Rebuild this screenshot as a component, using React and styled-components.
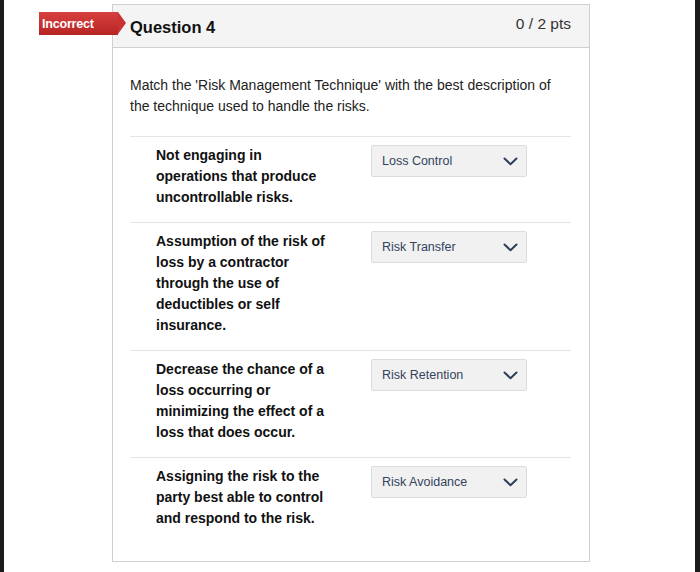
import React from "react";
import styled, { createGlobalStyle } from "styled-components";

const Global = createGlobalStyle`
  html, body { margin: 0; padding: 0; background: #fff; }
  body { font-family: "Liberation Sans", Arial, sans-serif; color: #111; }
`;

const Page = styled.div`
  box-sizing: border-box;
  height: 572px;
  border-left: 4px solid #1b1b1b;
  border-right: 5px solid #1b1b1b;
  padding: 4px 0 0 108px;
  position: relative;
`;

const Card = styled.div`
  position: relative;
  box-sizing: border-box;
  width: 478px;
  height: 558px;
  border: 1px solid #cfcfcf;
  background: #fff;
`;

const Header = styled.div`
  display: flex;
  align-items: center;
  justify-content: space-between;
  height: 42px;
  padding: 0 18px 0 17px;
  background: #f4f4f4;
  border-bottom: 1px solid #cfcfcf;
`;

const Title = styled.div`
  font-size: 16.5px;
  font-weight: 700;
  color: #111;
  margin-top: 3px;
`;

const Points = styled.div`
  font-size: 15.5px;
  color: #333;
  margin-top: -5px;
`;

const Badge = styled.div`
  position: absolute;
  left: -74px;
  top: 7px;
  height: 23px;
  width: 76px;
  padding-left: 3px;
  display: flex;
  align-items: center;
  color: #fff;
  font-size: 12.5px;
  font-weight: 700;
  letter-spacing: -0.2px;
  background: linear-gradient(#d8403f, #b72424);
  &::after {
    content: "";
    position: absolute;
    right: -8px;
    top: 0;
    border-top: 11.5px solid transparent;
    border-bottom: 11.5px solid transparent;
    border-left: 8px solid #c83232;
  }
`;

const Body = styled.div`
  padding: 27px 18px 0 17px;
`;

const Prompt = styled.p`
  margin: 0 0 19px;
  font-size: 14px;
  line-height: 21px;
  color: #222;
`;

const Row = styled.div`
  display: grid;
  grid-template-columns: 180px 156px;
  column-gap: 35px;
  align-items: start;
  padding: 8px 0 14px 26px;
  border-top: 1px solid #e4e4e4;
`;

const Term = styled.div`
  font-size: 14px;
  font-weight: 700;
  line-height: 21px;
  color: #111;
`;

const Select = styled.div`
  box-sizing: border-box;
  height: 32px;
  display: flex;
  align-items: center;
  justify-content: space-between;
  padding: 0 8px 0 10px;
  background: #f1f1f1;
  border: 1px solid #dcdcdc;
  border-radius: 2px;
  font-size: 12.5px;
  color: #34435e;
`;

const Chevron = () => (
  <svg width="15" height="9" viewBox="0 0 15 9">
    <path d="M1.5 1.5 L7.5 7.2 L13.5 1.5" fill="none" stroke="#2d3f5a" strokeWidth="2" strokeLinecap="round" strokeLinejoin="round" />
  </svg>
);

const rows = [
  ["Not engaging in operations that produce uncontrollable risks.", "Loss Control"],
  ["Assumption of the risk of loss by a contractor through the use of deductibles or self insurance.", "Risk Transfer"],
  ["Decrease the chance of a loss occurring or minimizing the effect of a loss that does occur.", "Risk Retention"],
  ["Assigning the risk to the party best able to control and respond to the risk.", "Risk Avoidance"],
];

export default function App() {
  return (
    <>
      <Global />
      <Page>
        <Card>
          <Badge>Incorrect</Badge>
          <Header>
            <Title>Question 4</Title>
            <Points>0 / 2 pts</Points>
          </Header>
          <Body>
            <Prompt>
              Match the 'Risk Management Technique' with the best description of the technique used to handle the risks.
            </Prompt>
            {rows.map(([t, v]) => (
              <Row key={t}>
                <Term>{t}</Term>
                <Select>
                  <span>{v}</span>
                  <Chevron />
                </Select>
              </Row>
            ))}
          </Body>
        </Card>
      </Page>
    </>
  );
}
